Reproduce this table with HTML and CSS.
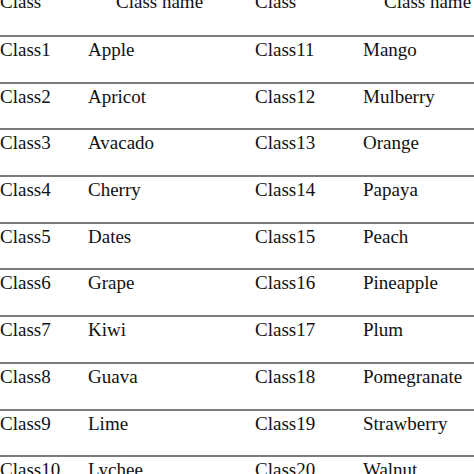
FILE: index.html
```html
<!DOCTYPE html>
<html>
<head>
<meta charset="utf-8">
<link rel="stylesheet" href="styles.css">
</head>
<body>
<div class="table">
  <div class="row head">
    <div class="c1">Class</div><div class="c2 hn">Class name</div><div class="c3">Class</div><div class="c4 hn4">Class name</div>
  </div>
  <div class="row"><div class="c1">Class1</div><div class="c2">Apple</div><div class="c3">Class11</div><div class="c4">Mango</div></div>
  <div class="row"><div class="c1">Class2</div><div class="c2">Apricot</div><div class="c3">Class12</div><div class="c4">Mulberry</div></div>
  <div class="row"><div class="c1">Class3</div><div class="c2">Avacado</div><div class="c3">Class13</div><div class="c4">Orange</div></div>
  <div class="row"><div class="c1">Class4</div><div class="c2">Cherry</div><div class="c3">Class14</div><div class="c4">Papaya</div></div>
  <div class="row"><div class="c1">Class5</div><div class="c2">Dates</div><div class="c3">Class15</div><div class="c4">Peach</div></div>
  <div class="row"><div class="c1">Class6</div><div class="c2">Grape</div><div class="c3">Class16</div><div class="c4">Pineapple</div></div>
  <div class="row"><div class="c1">Class7</div><div class="c2">Kiwi</div><div class="c3">Class17</div><div class="c4">Plum</div></div>
  <div class="row"><div class="c1">Class8</div><div class="c2">Guava</div><div class="c3">Class18</div><div class="c4">Pomegranate</div></div>
  <div class="row"><div class="c1">Class9</div><div class="c2">Lime</div><div class="c3">Class19</div><div class="c4">Strawberry</div></div>
  <div class="row"><div class="c1">Class10</div><div class="c2">Lychee</div><div class="c3">Class20</div><div class="c4">Walnut</div></div>
</div>
</body>
</html>
```
FILE: styles.css
```css
html, body {
  margin: 0;
  padding: 0;
  background: #ffffff;
  overflow: hidden;
}
.table {
  margin-top: -13px;
  font-family: "Liberation Serif", "Times New Roman", serif;
  font-size: 19px;
  line-height: 21px;
  color: #111111;
}
.row {
  display: grid;
  grid-template-columns: 88px 167px 108px 1fr;
  box-sizing: border-box;
  height: 46.7px;
  padding-top: 2px;
  border-top: 2px solid #7c7c7c;
  white-space: nowrap;
}
.row.head {
  height: 48px;
  padding-top: 4px;
  border-top: none;
}
.hn {
  padding-left: 28px;
}
.hn4 {
  padding-left: 21px;
}
```
